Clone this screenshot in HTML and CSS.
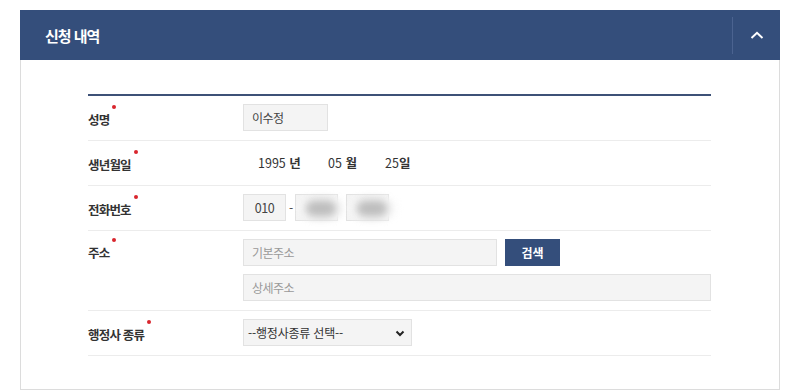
FILE: index.html
```html
<!DOCTYPE html>
<html lang="ko">
<head>
<meta charset="utf-8">
<title>신청 내역</title>
<link rel="stylesheet" href="styles.css">
</head>
<body>
<div class="page">
  <section class="card">
    <header class="card-head">
      <h2 class="card-title">신청 내역</h2>
      <button class="toggle" type="button" aria-label="접기">
        <svg width="14" height="8" viewBox="0 0 14 8"><path d="M1.5 7 L7 1.8 L12.5 7" fill="none" stroke="#fff" stroke-width="2"/></svg>
      </button>
    </header>
    <div class="card-body">
      <div class="form">
        <div class="row">
          <div class="label"><span class="req">성명</span></div>
          <div class="field">
            <div class="box name">이수정</div>
          </div>
        </div>
        <div class="row">
          <div class="label"><span class="req">생년월일</span></div>
          <div class="field">
            <span class="date d-y">1995 <b>년</b></span>
            <span class="date d-m">05 <b>월</b></span>
            <span class="date d-d">25<b>일</b></span>
          </div>
        </div>
        <div class="row">
          <div class="label"><span class="req">전화번호</span></div>
          <div class="field">
            <div class="box phone">010</div>
            <span class="dash">-</span>
            <div class="box phone blurbox"><span class="halo"></span><span class="blob"></span></div>
            <div class="box phone blurbox"><span class="halo"></span><span class="blob"></span></div>
          </div>
        </div>
        <div class="row row-tall">
          <div class="label"><span class="req">주소</span></div>
          <div class="field col">
            <div class="line">
              <div class="box addr placeholder">기본주소</div>
              <button class="btn" type="button">검색</button>
            </div>
            <div class="box addr-detail placeholder">상세주소</div>
          </div>
        </div>
        <div class="row">
          <div class="label"><span class="req">행정사 종류</span></div>
          <div class="field">
            <div class="box select">--행정사종류 선택--
              <svg class="caret" width="10" height="7" viewBox="0 0 10 7"><path d="M1.5 1.5 L5 5 L8.5 1.5" fill="none" stroke="#222" stroke-width="2"/></svg>
            </div>
          </div>
        </div>
      </div>
    </div>
  </section>
</div>
</body>
</html>
```
FILE: styles.css
```css
* { box-sizing: border-box; }
html, body { margin: 0; padding: 0; background: #fff; }
body {
  font-family: "Noto Sans CJK KR", "Noto Sans", "Liberation Sans", sans-serif;
  color: #333;
  font-size: 12px;
}
.page { padding: 10px 20px 0 20px; }
.card {
  width: 760px;
  border: 1px solid #dcdcdc;
  border-top: none;
}
.card-head {
  height: 50px;
  background: #344e7b;
  margin: 0 -1px;
  display: flex;
  align-items: center;
  justify-content: space-between;
  padding-left: 25px;
}
.card-title {
  margin: 0;
  color: #fff;
  font-size: 15px;
  font-weight: 700;
  letter-spacing: -1px;
}
.toggle {
  height: 37px;
  width: 48px;
  border: none;
  border-left: 1px solid #4b6390;
  background: transparent;
  display: flex;
  align-items: center;
  justify-content: center;
  padding: 0;
}
.card-body { padding: 34px 68px 33px 67px; }
.form { border-top: 2px solid #3d5177; }
.row {
  display: flex;
  border-bottom: 1px solid #ececec;
  min-height: 45px;
}
.label {
  width: 155px;
  flex: none;
  padding-top: 14px;
  font-weight: 700;
  font-size: 12.5px;
  letter-spacing: -0.8px;
  color: #333;
}
.row-tall .label { padding-top: 12px; }
.req { position: relative; }
.req::after {
  content: "";
  position: absolute;
  right: -7px;
  top: -5px;
  width: 4px;
  height: 4px;
  border-radius: 50%;
  background: #d9252d;
}
.field {
  display: flex;
  align-items: center;
  padding: 8px 0 9px;
}
.field.col { flex-direction: column; align-items: stretch; gap: 8px; flex: 1; }
.line { display: flex; gap: 8px; }
.box {
  height: 27px;
  background: #f4f4f4;
  border: 1px solid #e2e2e2;
  display: flex;
  align-items: center;
  padding: 0 8px;
  letter-spacing: -0.5px;
  color: #444;
}
.name { width: 85px; }
.date { display: inline-block; font-size: 12.5px; color: #333; }
.date b { font-weight: 700; }
.d-y { margin-left: 15px; width: 70px; }
.d-m { width: 57px; }
.phone { width: 43px; justify-content: center; padding: 0; font-size: 12.5px; }
.dash { margin: 0 2px 0 3px; width: 4px; color: #444; }
.blurbox + .blurbox { margin-left: 8px; }
.blurbox { position: relative; }
.halo {
  position: absolute;
  left: 3px;
  top: 2px;
  width: 48px;
  height: 23px;
  border-radius: 12px;
  background: #fbfbfb;
  filter: blur(3px);
}
.blob {
  position: absolute;
  left: 9px;
  top: 5px;
  width: 32px;
  height: 17px;
  border-radius: 9px;
  background: #bdbdbd;
  filter: blur(4px);
}
.addr { width: 254px; }
.placeholder { color: #999; }
.btn {
  width: 55px;
  height: 27px;
  border: none;
  background: #344e7b;
  color: #fff;
  font-family: inherit;
  font-size: 12px;
  font-weight: 700;
  padding: 0;
}
.addr-detail { width: 468px; }
.select {
  width: 169px;
  position: relative;
  padding-left: 4px;
  color: #333;
  letter-spacing: -0.2px;
}
.caret { position: absolute; right: 6px; top: 10px; }
```
